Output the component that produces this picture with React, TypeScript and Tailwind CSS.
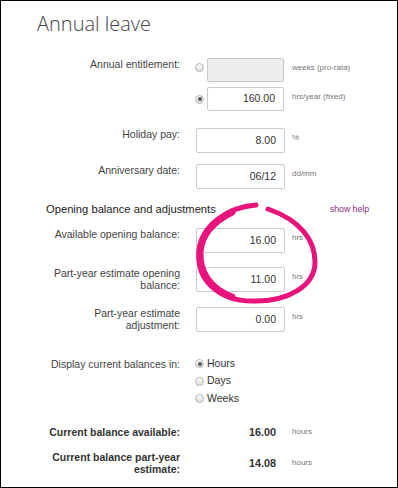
function Radio({ checked = false }: { checked?: boolean }) {
  return (
    <span className="inline-flex h-[9px] w-[9px] shrink-0 items-center justify-center rounded-full border border-[#b4b4b4] bg-gradient-to-b from-[#fdfdfd] to-[#dcdcdc]">
      {checked && <span className="h-[4px] w-[4px] rounded-full bg-[#555]" />}
    </span>
  );
}

function Field({
  label,
  value,
  unit,
}: {
  label: React.ReactNode;
  value: string;
  unit: string;
}) {
  return (
    <div className="flex items-start">
      <div className="w-[179px] text-right leading-[12px] text-[#444]">{label}</div>
      <div className="ml-[16px] flex h-[25px] w-[89px] items-center justify-end rounded-[2px] border border-[#cacaca] bg-white pr-[8px] text-[#333]">
        {value}
      </div>
      <div className="ml-[7px] pt-[5px] text-[8px] leading-[10px] text-[#777]">{unit}</div>
    </div>
  );
}

export default function App() {
  return (
    <div className="relative h-[488px] w-[398px] border border-black bg-white font-['Liberation_Sans',Arial,sans-serif] text-[10.5px]">
      <h1 className="pl-[36px] pt-[11px] font-['Open_Sans',sans-serif] text-[20px] font-light leading-[24px] text-[#444]">
        Annual leave
      </h1>

      {/* entitlement */}
      <div className="mt-[22px] flex items-start">
        <div className="w-[179px] text-right leading-[12px] text-[#444]">Annual entitlement:</div>
        <div className="ml-[15px] flex flex-col gap-[5px]">
          <div className="flex items-start">
            <span className="mt-[3px]">
              <Radio />
            </span>
            <div className="ml-[3px] h-[24px] w-[77px] rounded-[2px] border border-[#cacaca] bg-[#eeeeee]" />
            <div className="ml-[8px] pt-[5px] text-[8px] leading-[10px] text-[#777]">weeks (pro-rata)</div>
          </div>
          <div className="flex items-start">
            <span className="mt-[3px]">
              <Radio checked />
            </span>
            <div className="ml-[3px] flex h-[24px] w-[77px] items-center justify-end rounded-[2px] border border-[#cacaca] bg-white pr-[8px] text-[#333]">
              160.00
            </div>
            <div className="ml-[8px] pt-[5px] text-[8px] leading-[10px] text-[#777]">hrs/year (fixed)</div>
          </div>
        </div>
      </div>

      <div className="mt-[17px]">
        <Field label="Holiday pay:" value="8.00" unit="%" />
      </div>
      <div className="mt-[11px]">
        <Field label="Anniversary date:" value="06/12" unit="dd/mm" />
      </div>

      <div className="mt-[14px] flex items-center leading-[13px]">
        <span className="pl-[45px] text-[11.2px] text-[#222]">Opening balance and adjustments</span>
        <span className="ml-auto mr-[28px] text-[8.7px] text-[#8a2a7c]">show help</span>
      </div>

      <div className="mt-[12px]">
        <Field label="Available opening balance:" value="16.00" unit="hrs" />
      </div>
      <div className="mt-[14px]">
        <Field
          label={
            <>
              Part-year estimate opening
              <br />
              balance:
            </>
          }
          value="11.00"
          unit="hrs"
        />
      </div>
      <div className="mt-[15px]">
        <Field
          label={
            <>
              Part-year estimate
              <br />
              adjustment:
            </>
          }
          value="0.00"
          unit="hrs"
        />
      </div>

      {/* display units */}
      <div className="mt-[23px] flex items-start">
        <div className="w-[179px] pt-[3px] text-right leading-[12px] text-[#444]">Display current balances in:</div>
        <div className="ml-[15px] flex flex-col text-[#333]">
          {[
            ["Hours", true],
            ["Days", false],
            ["Weeks", false],
          ].map(([name, on]) => (
            <div key={name as string} className="flex h-[17.5px] items-center">
              <Radio checked={on as boolean} />
              <span className="ml-[3px]">{name as string}</span>
            </div>
          ))}
        </div>
      </div>

      <div className="mt-[16px] flex items-center">
        <div className="w-[179px] text-right font-bold leading-[12px] text-[#333]">Current balance available:</div>
        <div className="ml-[16px] w-[89px] pr-[9px] text-right text-[10.8px] font-bold text-[#333]">16.00</div>
        <div className="ml-[7px] text-[8px] text-[#777]">hours</div>
      </div>
      <div className="mt-[11px] flex items-center">
        <div className="w-[179px] text-right font-bold leading-[12px] text-[#333]">
          Current balance part-year
          <br />
          estimate:
        </div>
        <div className="ml-[16px] w-[89px] pr-[9px] text-right text-[10.8px] font-bold text-[#333]">14.08</div>
        <div className="ml-[7px] text-[8px] text-[#777]">hours</div>
      </div>

      {/* hand-drawn highlight */}
      <svg className="pointer-events-none absolute left-[-1px] top-[-1px]" width="398" height="488" viewBox="0 0 398 488">
        <path
          d="M256 205 C228 207 202 225 199 251 C196 281 220 301 252 301 C288 302 315 286 315 262 C315 240 300 220 268 209"
          fill="none"
          stroke="#e8147c"
          strokeWidth="5"
          strokeLinecap="round"
        />
        <path
          d="M232 212 C212 222 201 236 200 252 C199 272 210 289 232 297"
          fill="none"
          stroke="#e8147c"
          strokeWidth="7"
          strokeLinecap="round"
        />
      </svg>
    </div>
  );
}
